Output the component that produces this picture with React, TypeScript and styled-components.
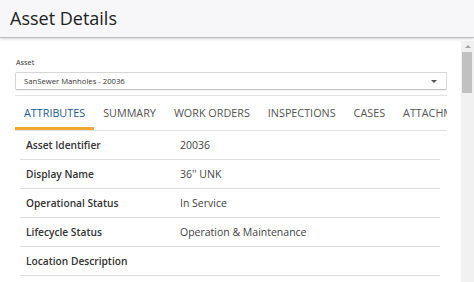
import React from "react";
import styled, { createGlobalStyle } from "styled-components";

const Global = createGlobalStyle`
  html, body { margin: 0; padding: 0; background: #fff; overflow: hidden; }
  body { font-family: "Open Sans", "Liberation Sans", sans-serif; }
  * { box-sizing: border-box; }
`;

const Page = styled.div`
  width: 474px;
  height: 282px;
  display: flex;
  flex-direction: column;
  overflow: hidden;
`;

const Header = styled.header`
  height: 38px;
  flex: none;
  display: flex;
  align-items: center;
  padding-left: 10px;
  background: #f7f7f9;
  border-bottom: 1px solid #bdbdbd;
  box-shadow: 0 1px 3px rgba(0, 0, 0, 0.18);
  position: relative;
  z-index: 1;
`;

const Title = styled.h1`
  margin: 0;
  font-size: 18px;
  font-weight: 400;
  color: #222;
  line-height: 24px;
  padding-bottom: 1px;
`;

const Body = styled.div`
  flex: 1;
  display: flex;
  min-height: 0;
`;

const Main = styled.main`
  flex: 1;
  padding: 19px 14px 0 15px;
  overflow: hidden;
`;

const FieldLabel = styled.label`
  display: block;
  font-size: 7.3px;
  line-height: 11px;
  color: #333;
  padding-left: 1px;
  margin-bottom: 4px;
`;

const Select = styled.div`
  height: 18px;
  display: flex;
  align-items: center;
  justify-content: space-between;
  padding: 0 9px 0 8px;
  border: 1px solid #d6d6d6;
  border-bottom-color: #c4c4c4;
  border-radius: 2px;
  box-shadow: 0 1px 1px rgba(0, 0, 0, 0.06);
  font-size: 7.7px;
  color: #333;
`;

const Caret = styled.span`
  width: 0;
  height: 0;
  border-left: 3px solid transparent;
  border-right: 3px solid transparent;
  border-top: 3px solid #555;
  margin-top: 1px;
`;

const Tabs = styled.nav`
  margin-top: 5px;
  display: flex;
  border-top: 1px solid #e2e2e2;
  border-bottom: 1px solid #e2e2e2;
  overflow: hidden;
  white-space: nowrap;
`;

const Tab = styled.div<{ $active?: boolean }>`
  flex: none;
  padding: 10px 9px 7px;
  font-size: 10.8px;
  line-height: 14px;
  color: ${(p) => (p.$active ? "#1d5b93" : "#555")};
  border-bottom: 3px solid ${(p) => (p.$active ? "#f0a733" : "transparent")};
`;

const Rows = styled.div`
  margin: 0 7px 0 5px;
`;

const Row = styled.div`
  display: grid;
  grid-template-columns: 160px 1fr;
  align-items: center;
  height: 29px;
  border-bottom: 1px solid #dedede;
  font-size: 10.5px;
`;

const Name = styled.span`
  padding-left: 6px;
  font-weight: 600;
  font-size: 10.2px;
  color: #333;
`;

const Value = styled.span`
  color: #444;
`;

const Scrollbar = styled.div`
  flex: none;
  width: 13px;
  margin-top: 3px;
  background: #f1f1f1;
  display: flex;
  flex-direction: column;
  align-items: center;
`;

const ArrowUp = styled.div`
  height: 11px;
  display: flex;
  align-items: center;
  justify-content: center;
  &::before {
    content: "";
    border-left: 3px solid transparent;
    border-right: 3px solid transparent;
    border-bottom: 3px solid #a3a3a3;
  }
`;

const Thumb = styled.div`
  width: 10px;
  height: 41px;
  background: #c1c1c1;
  margin-left: -2px;
`;

const tabs = ["ATTRIBUTES", "SUMMARY", "WORK ORDERS", "INSPECTIONS", "CASES", "ATTACHMENTS"];

const attributes: [string, string][] = [
  ["Asset Identifier", "20036"],
  ["Display Name", "36'' UNK"],
  ["Operational Status", "In Service"],
  ["Lifecycle Status", "Operation & Maintenance"],
  ["Location Description", ""],
];

export default function App() {
  return (
    <Page>
      <Global />
      <Header>
        <Title>Asset Details</Title>
      </Header>
      <Body>
        <Main>
          <FieldLabel>Asset</FieldLabel>
          <Select>
            <span>SanSewer Manholes - 20036</span>
            <Caret />
          </Select>
          <Tabs>
            {tabs.map((t, i) => (
              <Tab key={t} $active={i === 0}>
                {t}
              </Tab>
            ))}
          </Tabs>
          <Rows>
            {attributes.map(([k, v]) => (
              <Row key={k}>
                <Name>{k}</Name>
                <Value>{v}</Value>
              </Row>
            ))}
          </Rows>
        </Main>
        <Scrollbar>
          <ArrowUp />
          <Thumb />
        </Scrollbar>
      </Body>
    </Page>
  );
}
